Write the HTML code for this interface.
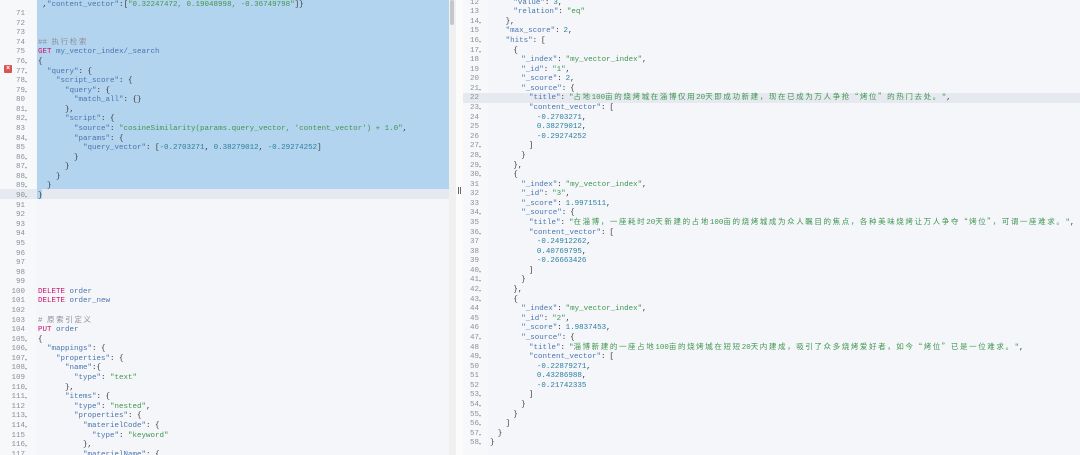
<!DOCTYPE html>
<html><head><meta charset="utf-8"><style>
*{margin:0;padding:0;box-sizing:border-box}
body{width:1080px;height:455px;overflow:hidden;background:#f5f6fa;position:relative;font-family:"Liberation Mono","Noto Sans CJK SC",monospace;font-size:7.5px}
.pane{position:absolute;top:0;height:455px;overflow:hidden}
.g{position:absolute;top:0;height:455px;background:#f7f8fa}
.ln{position:absolute;left:0;color:#8a8f99;text-align:right}
.code{position:absolute;color:#333}
.l{height:9.58px;line-height:9.58px;white-space:pre;overflow:visible}
.k{color:#4a76ad}.s{color:#3f9650}.n{color:#2a7f9e}.m{color:#c8106e}.c{color:#8a8f99}
.z{font-family:"Noto Sans CJK SC",sans-serif;letter-spacing:1.6px;line-height:0}
.f{display:inline-block;vertical-align:top;width:4.5px;height:9.58px;position:relative}
.f:after{content:"";position:absolute;left:0.5px;top:4px;border-left:1.5px solid transparent;border-right:1.5px solid transparent;border-top:2px solid #999}
</style></head><body>
<div class="pane" style="left:0;width:456px;background:#f5f6fa">
 <div class="g" style="left:0;width:36px"></div>
 <div style="position:absolute;left:37px;top:0;width:412px;height:189px;background:#b3d4ef"></div>
 <div style="position:absolute;left:0;top:189px;width:449px;height:10px;background:#e6e9ef"></div>
 <div style="position:absolute;left:37px;top:189px;width:5px;height:10px;background:#b3d4ef"></div>
 <div style="position:absolute;left:4px;top:65px;width:8px;height:8px;background:#d9534f;border-radius:1px;color:#fff;font:bold 7px/8px 'Liberation Sans',sans-serif;text-align:center">×</div>
 <div style="position:absolute;left:449px;top:0;width:7px;height:455px;background:#f0f0f0"></div>
 <div style="position:absolute;left:450px;top:0;width:4px;height:25px;background:#c4c6ca;border-radius:2px"></div>
 <div class="ln" style="top:0.5px;width:34px">
<div class="l"> </div>
<div class="l">71  </div>
<div class="l">72  </div>
<div class="l">73  </div>
<div class="l">74  </div>
<div class="l">75  </div>
<div class="l">76<span class="f"></span> </div>
<div class="l">77<span class="f"></span> </div>
<div class="l">78<span class="f"></span> </div>
<div class="l">79<span class="f"></span> </div>
<div class="l">80  </div>
<div class="l">81<span class="f"></span> </div>
<div class="l">82<span class="f"></span> </div>
<div class="l">83  </div>
<div class="l">84<span class="f"></span> </div>
<div class="l">85  </div>
<div class="l">86<span class="f"></span> </div>
<div class="l">87<span class="f"></span> </div>
<div class="l">88<span class="f"></span> </div>
<div class="l">89<span class="f"></span> </div>
<div class="l">90<span class="f"></span> </div>
<div class="l">91  </div>
<div class="l">92  </div>
<div class="l">93  </div>
<div class="l">94  </div>
<div class="l">95  </div>
<div class="l">96  </div>
<div class="l">97  </div>
<div class="l">98  </div>
<div class="l">99  </div>
<div class="l">100  </div>
<div class="l">101  </div>
<div class="l">102  </div>
<div class="l">103  </div>
<div class="l">104  </div>
<div class="l">105<span class="f"></span> </div>
<div class="l">106<span class="f"></span> </div>
<div class="l">107<span class="f"></span> </div>
<div class="l">108<span class="f"></span> </div>
<div class="l">109  </div>
<div class="l">110<span class="f"></span> </div>
<div class="l">111<span class="f"></span> </div>
<div class="l">112  </div>
<div class="l">113<span class="f"></span> </div>
<div class="l">114<span class="f"></span> </div>
<div class="l">115  </div>
<div class="l">116<span class="f"></span> </div>
<div class="l">117<span class="f"></span> </div>
 </div>
 <div class="code" style="left:38px;top:0.5px">
<div class="l"> ,<span class="k">"content_vector"</span>:[<span class="s">"0.32247472, 0.19048998, -0.36749798"</span>]}</div>
<div class="l"> </div>
<div class="l"> </div>
<div class="l"> </div>
<div class="l"><span class="c">## <span class="z">执行检索</span></span></div>
<div class="l"><span class="m">GET</span> <span class="k">my_vector_index/_search</span></div>
<div class="l">{</div>
<div class="l">  <span class="k">"query"</span>: {</div>
<div class="l">    <span class="k">"script_score"</span>: {</div>
<div class="l">      <span class="k">"query"</span>: {</div>
<div class="l">        <span class="k">"match_all"</span>: {}</div>
<div class="l">      },</div>
<div class="l">      <span class="k">"script"</span>: {</div>
<div class="l">        <span class="k">"source"</span>: <span class="s">"cosineSimilarity(params.query_vector, 'content_vector') + 1.0"</span>,</div>
<div class="l">        <span class="k">"params"</span>: {</div>
<div class="l">          <span class="k">"query_vector"</span>: [<span class="n">-0.2703271</span>, <span class="n">0.38279012</span>, <span class="n">-0.29274252</span>]</div>
<div class="l">        }</div>
<div class="l">      }</div>
<div class="l">    }</div>
<div class="l">  }</div>
<div class="l">}</div>
<div class="l"> </div>
<div class="l"> </div>
<div class="l"> </div>
<div class="l"> </div>
<div class="l"> </div>
<div class="l"> </div>
<div class="l"> </div>
<div class="l"> </div>
<div class="l"> </div>
<div class="l"><span class="m">DELETE</span> <span class="k">order</span></div>
<div class="l"><span class="m">DELETE</span> <span class="k">order_new</span></div>
<div class="l"> </div>
<div class="l"><span class="c"># <span class="z">原索引定义</span></span></div>
<div class="l"><span class="m">PUT</span> <span class="k">order</span></div>
<div class="l">{</div>
<div class="l">  <span class="k">"mappings"</span>: {</div>
<div class="l">    <span class="k">"properties"</span>: {</div>
<div class="l">      <span class="k">"name"</span>:{</div>
<div class="l">        <span class="k">"type"</span>: <span class="s">"text"</span></div>
<div class="l">      },</div>
<div class="l">      <span class="k">"items"</span>: {</div>
<div class="l">        <span class="k">"type"</span>: <span class="s">"nested"</span>,</div>
<div class="l">        <span class="k">"properties"</span>: {</div>
<div class="l">          <span class="k">"materielCode"</span>: {</div>
<div class="l">            <span class="k">"type"</span>: <span class="s">"keyword"</span></div>
<div class="l">          },</div>
<div class="l">          <span class="k">"materielName"</span>: {</div>
 </div>
</div>
<div style="position:absolute;left:456px;top:0;width:7px;height:455px;background:#fbfbfc"></div>
<div style="position:absolute;left:458px;top:187px;width:1px;height:7px;background:#666"></div>
<div style="position:absolute;left:460px;top:187px;width:1px;height:7px;background:#666"></div>
<div class="pane" style="left:463px;width:617px;background:#f5f6fa">
 <div class="g" style="left:0;width:25px"></div>
 <div style="position:absolute;left:0;top:93px;width:617px;height:10px;background:#e6e9ef"></div>
 <div class="ln" style="top:-1.3px;width:25px">
<div class="l">12  </div>
<div class="l">13  </div>
<div class="l">14<span class="f"></span> </div>
<div class="l">15  </div>
<div class="l">16<span class="f"></span> </div>
<div class="l">17<span class="f"></span> </div>
<div class="l">18  </div>
<div class="l">19  </div>
<div class="l">20  </div>
<div class="l">21<span class="f"></span> </div>
<div class="l">22  </div>
<div class="l">23<span class="f"></span> </div>
<div class="l">24  </div>
<div class="l">25  </div>
<div class="l">26  </div>
<div class="l">27<span class="f"></span> </div>
<div class="l">28<span class="f"></span> </div>
<div class="l">29<span class="f"></span> </div>
<div class="l">30<span class="f"></span> </div>
<div class="l">31  </div>
<div class="l">32  </div>
<div class="l">33  </div>
<div class="l">34<span class="f"></span> </div>
<div class="l">35  </div>
<div class="l">36<span class="f"></span> </div>
<div class="l">37  </div>
<div class="l">38  </div>
<div class="l">39  </div>
<div class="l">40<span class="f"></span> </div>
<div class="l">41<span class="f"></span> </div>
<div class="l">42<span class="f"></span> </div>
<div class="l">43<span class="f"></span> </div>
<div class="l">44  </div>
<div class="l">45  </div>
<div class="l">46  </div>
<div class="l">47<span class="f"></span> </div>
<div class="l">48  </div>
<div class="l">49<span class="f"></span> </div>
<div class="l">50  </div>
<div class="l">51  </div>
<div class="l">52  </div>
<div class="l">53<span class="f"></span> </div>
<div class="l">54<span class="f"></span> </div>
<div class="l">55<span class="f"></span> </div>
<div class="l">56<span class="f"></span> </div>
<div class="l">57<span class="f"></span> </div>
<div class="l">58<span class="f"></span> </div>
 </div>
 <div class="code" style="left:27px;top:-1.3px;word-spacing:-0.6px">
<div class="l">      <span class="k">"value"</span>: <span class="n">3</span>,</div>
<div class="l">      <span class="k">"relation"</span>: <span class="s">"eq"</span></div>
<div class="l">    },</div>
<div class="l">    <span class="k">"max_score"</span>: <span class="n">2</span>,</div>
<div class="l">    <span class="k">"hits"</span>: [</div>
<div class="l">      {</div>
<div class="l">        <span class="k">"_index"</span>: <span class="s">"my_vector_index"</span>,</div>
<div class="l">        <span class="k">"_id"</span>: <span class="s">"1"</span>,</div>
<div class="l">        <span class="k">"_score"</span>: <span class="n">2</span>,</div>
<div class="l">        <span class="k">"_source"</span>: {</div>
<div class="l">          <span class="k">"title"</span>: <span class="s">"<span class="z">占地</span>100<span class="z">亩的烧烤城在淄博仅用</span>20<span class="z">天即成功新建，现在已成为万人争抢“烤位”的热门去处。</span>"</span>,</div>
<div class="l">          <span class="k">"content_vector"</span>: [</div>
<div class="l">            <span class="n">-0.2703271</span>,</div>
<div class="l">            <span class="n">0.38279012</span>,</div>
<div class="l">            <span class="n">-0.29274252</span></div>
<div class="l">          ]</div>
<div class="l">        }</div>
<div class="l">      },</div>
<div class="l">      {</div>
<div class="l">        <span class="k">"_index"</span>: <span class="s">"my_vector_index"</span>,</div>
<div class="l">        <span class="k">"_id"</span>: <span class="s">"3"</span>,</div>
<div class="l">        <span class="k">"_score"</span>: <span class="n">1.9971511</span>,</div>
<div class="l">        <span class="k">"_source"</span>: {</div>
<div class="l">          <span class="k">"title"</span>: <span class="s">"<span class="z">在淄博，一座耗时</span>20<span class="z">天新建的占地</span>100<span class="z">亩的烧烤城成为众人瞩目的焦点，各种美味烧烤让万人争夺“烤位”，可谓一座难求。</span>"</span>,</div>
<div class="l">          <span class="k">"content_vector"</span>: [</div>
<div class="l">            <span class="n">-0.24912262</span>,</div>
<div class="l">            <span class="n">0.40769795</span>,</div>
<div class="l">            <span class="n">-0.26663426</span></div>
<div class="l">          ]</div>
<div class="l">        }</div>
<div class="l">      },</div>
<div class="l">      {</div>
<div class="l">        <span class="k">"_index"</span>: <span class="s">"my_vector_index"</span>,</div>
<div class="l">        <span class="k">"_id"</span>: <span class="s">"2"</span>,</div>
<div class="l">        <span class="k">"_score"</span>: <span class="n">1.9837453</span>,</div>
<div class="l">        <span class="k">"_source"</span>: {</div>
<div class="l">          <span class="k">"title"</span>: <span class="s">"<span class="z">淄博新建的一座占地</span>100<span class="z">亩的烧烤城在短短</span>20<span class="z">天内建成，吸引了众多烧烤爱好者，如今“烤位”已是一位难求。</span>"</span>,</div>
<div class="l">          <span class="k">"content_vector"</span>: [</div>
<div class="l">            <span class="n">-0.22879271</span>,</div>
<div class="l">            <span class="n">0.43286988</span>,</div>
<div class="l">            <span class="n">-0.21742335</span></div>
<div class="l">          ]</div>
<div class="l">        }</div>
<div class="l">      }</div>
<div class="l">    ]</div>
<div class="l">  }</div>
<div class="l">}</div>
 </div>
</div>
</body></html>
